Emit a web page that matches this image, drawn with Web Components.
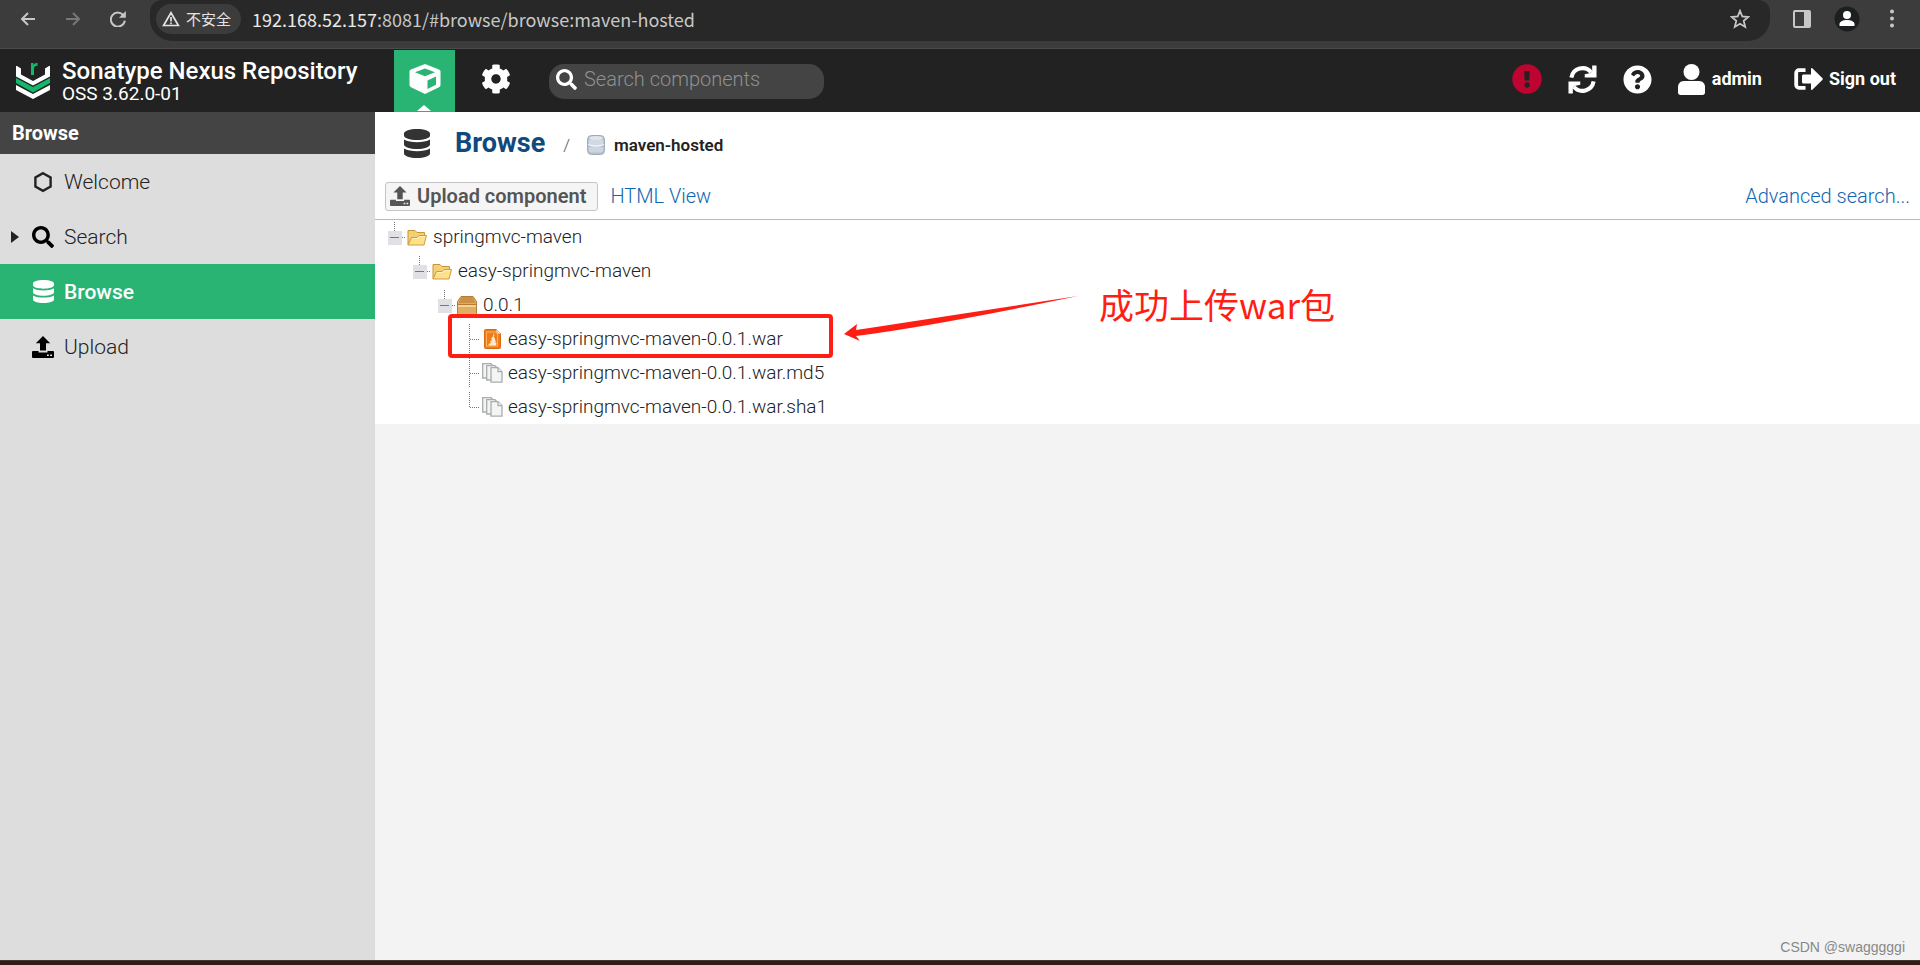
<!DOCTYPE html>
<html lang="en">
<head>
<meta charset="utf-8">
<title>Browse - Nexus Repository Manager</title>
<style>
  body { margin: 0; font-family: Roboto, "Noto Sans CJK SC", sans-serif; color: #222; }
</style>
</head>
<body>
<nexus-app></nexus-app>
<script>
const ICONS = {
  back: ['0 0 16 16', '<path d="M15 8H2M8 2 2 8l6 6" fill="none" stroke="currentColor" stroke-width="2"/>'],
  forward: ['0 0 16 16', '<path d="M1 8h13M8 2l6 6-6 6" fill="none" stroke="currentColor" stroke-width="2"/>'],
  reload: ['0 0 16 16', '<path d="M13.6 4.6A7 7 0 1 0 14.8 9.600" fill="none" stroke="currentColor" stroke-width="2"/><path d="M15.800 0v6.800H9z" fill="currentColor"/>'],
  warning: ['0 0 18 16', '<path d="M9 1.800 1.600 14.500h14.800z" fill="none" stroke="currentColor" stroke-width="1.700"/><path d="M9 6v4.500M9 11.500v1.700" stroke="currentColor" stroke-width="1.700"/>'],
  star: ['0 0 20 20', '<path d="M10 1.800l2.300 5.700 6 .5-4.600 3.900 1.500 6L10 14.700 4.800 17.900l1.500-6L1.700 8l6-.5z" fill="none" stroke="currentColor" stroke-width="1.800"/>'],
  panel: ['0 0 18 18', '<rect x="1" y="1" width="16" height="16" rx="1" fill="none" stroke="currentColor" stroke-width="2"/><path d="M11 1h6v16h-6z" fill="currentColor"/>'],
  avatar: ['0 0 26 26', '<circle cx="13" cy="13" r="12.500" fill="#1c1f1f"/><circle cx="13" cy="9" r="4" fill="#fff"/><path d="M5.500 20v-2c0-2.500 4-4 7.500-4s7.500 1.500 7.500 4v2z" fill="#fff"/>'],
  dots: ['0 0 4 20', '<circle cx="2" cy="2.500" r="2" fill="currentColor"/><circle cx="2" cy="9.500" r="2" fill="currentColor"/><circle cx="2" cy="16.500" r="2" fill="currentColor"/>'],
  logo: ['0 0 34 36', '<path d="M0 3h1l4 2.500v6L17 18l12-6.500v-6L33 3h1v10.500L17 22.500 0 13.500z" fill="#fff"/><path d="M0 15 17 24l17-9v5L17 29.500 0 20z" fill="#14b86b"/><path d="M0 22 17 31l17-9v5L17 36 0 27z" fill="#fff"/><path d="M15 12V0h2.500v2C18.500.5 19.500 0 21.500 0v2.800c-2.500 0-3.500 1-3.500 3.200v6z" fill="#14b86b"/>'],
  cube: ['0 0 32 30', '<path fill-rule="evenodd" d="M16 0 30 5.500Q31.500 6 31.500 7.500V21q0 1.500-1.500 2.200L16 30 2 23.200Q.5 22.500.5 21V7.500Q.5 6 2 5.500zM6 8.200l10 4 10-4L16 4.500zM18.500 16.500V25l8.500-4.300V12.500z" fill="currentColor"/>'],
  cog: ['0 0 512 512', '<path d="M487.4 315.7l-42.6-24.6c4.3-23.2 4.3-47 0-70.2l42.6-24.6c4.9-2.8 7.1-8.6 5.5-14-11.1-35.6-30-67.8-54.7-94.6-3.8-4.1-10-5.1-14.8-2.3L380.8 110c-17.9-15.4-38.5-27.3-60.8-35.100V25.800c0-5.600-3.900-10.500-9.400-11.700-36.700-8.200-74.300-7.800-109.200 0-5.500 1.200-9.400 6.100-9.400 11.700V75c-22.200 7.900-42.800 19.800-60.800 35.100L88.700 85.500c-4.900-2.800-11-1.900-14.800 2.300-24.700 26.700-43.600 58.900-54.700 94.600-1.700 5.400.6 11.200 5.500 14L67.300 221c-4.300 23.200-4.300 47 0 70.200l-42.600 24.600c-4.900 2.800-7.100 8.600-5.500 14 11.100 35.600 30 67.800 54.700 94.600 3.800 4.100 10 5.100 14.800 2.300l42.600-24.600c17.900 15.400 38.500 27.300 60.800 35.100v49.200c0 5.600 3.900 10.500 9.400 11.700 36.700 8.200 74.300 7.800 109.200 0 5.500-1.200 9.400-6.100 9.400-11.700v-49.200c22.200-7.900 42.800-19.800 60.800-35.100l42.600 24.600c4.900 2.800 11 1.900 14.800-2.300 24.700-26.700 43.600-58.900 54.700-94.600 1.500-5.500-.7-11.300-5.600-14.100zM256 336c-44.100 0-80-35.900-80-80s35.900-80 80-80 80 35.900 80 80-35.900 80-80 80z" fill="currentColor"/>'],
  search: ['0 0 512 512', '<path d="M505 442.700L405.300 343c-4.500-4.500-10.600-7-17-7H372c27.600-35.300 44-79.700 44-128C416 93.100 322.900 0 208 0S0 93.100 0 208s93.100 208 208 208c48.300 0 92.700-16.400 128-44v16.300c0 6.400 2.500 12.500 7 17l99.700 99.700c9.400 9.400 24.600 9.400 33.900 0l28.300-28.300c9.400-9.400 9.400-24.600.1-34zM208 336c-70.700 0-128-57.200-128-128 0-70.700 57.200-128 128-128 70.700 0 128 57.200 128 128 0 70.700-57.200 128-128 128z" fill="currentColor"/>'],
  alert: ['0 0 30 30', '<circle cx="15" cy="15" r="14.700" fill="#be0532"/><path d="M12.300 7h5.400l-.4 9.500h-4.600z" fill="#222"/><circle cx="15" cy="21" r="2.700" fill="#222"/>'],
  refresh: ['0 0 30 30', '<path d="M3.500 13A11.700 11.700 0 0 1 24 7.500M26.500 17A11.700 11.700 0 0 1 6 22.500" fill="none" stroke="currentColor" stroke-width="4.200"/><path d="M29.500.5V13H17.300V9.500l6-1.300 1.700-1.700V.5zM.5 29.500V17h12.200v3.500l-6 1.300L5 23.500v6z" fill="currentColor"/>'],
  help: ['0 0 512 512', '<path d="M504 256c0 136.997-111.043 248-248 248S8 392.997 8 256C8 119.083 119.043 8 256 8s248 111.083 248 248zM262.655 90c-54.497 0-89.255 22.957-116.549 63.758-3.536 5.286-2.353 12.415 2.715 16.258l34.699 26.310c5.205 3.947 12.621 3.008 16.665-2.122 17.864-22.658 30.113-35.797 57.303-35.797 20.429 0 45.698 13.148 45.698 32.958 0 14.976-12.363 22.667-32.534 33.976C247.128 238.528 216 254.941 216 296v4c0 6.627 5.373 12 12 12h56c6.627 0 12-5.373 12-12v-1.333c0-28.462 83.186-29.647 83.186-106.667 0-58.002-60.165-102-116.531-102zM256 338c-25.365 0-46 20.635-46 46 0 25.364 20.635 46 46 46s46-20.636 46-46c0-25.365-20.635-46-46-46z" fill="currentColor"/>'],
  user: ['0 0 27 31', '<circle cx="13.500" cy="8" r="8" fill="currentColor"/><path d="M6 17h15c4 0 6 3 6 6v5.500c0 1.500-1 2.500-2.500 2.500h-22C1 31 0 30 0 28.500V23c0-3 2-6 6-6z" fill="currentColor"/>'],
  signout: ['0 0 29 22', '<path d="M11.500 2.200H5A2.800 2.800 0 0 0 2.200 5v12A2.800 2.800 0 0 0 5 19.800h6.500" fill="none" stroke="currentColor" stroke-width="3.800"/><path d="M17 .8c0-.8.8-1 1.300-.5l10 9.700c.6.600.6 1.400 0 2l-10 9.700c-.5.5-1.300.3-1.300-.5V15.500H9.500c-.8 0-1.500-.7-1.500-1.500V8c0-.8.7-1.500 1.500-1.500H17z" fill="currentColor"/>'],
  hexagon: ['0 0 20 22', '<path d="M10 2.200l7.600 4.300v9L10 19.800l-7.600-4.300v-9z" fill="none" stroke="currentColor" stroke-width="2.400"/>'],
  database: ['0 0 26 29', '<path d="M0 4.500C0 1.800 6 0 13 0s13 1.800 13 4.500v2.200C26 9 20 11 13 11S0 9 0 6.700zM0 10.500c3 2 8 2.700 13 2.700s10-.7 13-2.700v5C26 18 20 20 13 20S0 18 0 15.500zM0 19.500c3 2 8 2.700 13 2.700s10-.7 13-2.700v5c0 2.500-6 4.500-13 4.500S0 27 0 24.500z" fill="currentColor"/>'],
  upload: ['0 0 22 22', '<path d="M11 0l7.200 7.200H14v7.300H8V7.200H3.800z" fill="currentColor"/><path d="M1 15h5.500v1.500h9V15H21q1 0 1 1v5q0 1-1 1H1q-1 0-1-1v-5q0-1 1-1z" fill="currentColor"/><path d="M15 18.500h1.800v1.500H15zM18.200 18.500H20v1.500h-1.800z" fill="#eee"/>'],
  hosted: ['0 0 18 20', '<rect x=".5" y=".5" width="17" height="19" rx="4" fill="#b5c0cd" stroke="#a2acb7"/><rect x="1.500" y="4" width="15" height="6" rx="3" fill="#d0d9e4"/><rect x="1.500" y="11.500" width="15" height="6" rx="3" fill="#ccd5e0"/><ellipse cx="9" cy="3" rx="7" ry="2" fill="#e0e5eb"/><path d="M1 9.500q8 3 16 0" fill="none" stroke="#f5f7fa" stroke-width="1.300"/>'],
  folder: ['0 0 20 17', '<path d="M1 16V1.500h7l2 2h7.500V6" fill="#f3cf78" stroke="#c89436"/><path d="M1 16 4.500 8.500H10l2-2h7.500L17 16z" fill="#fde08a" stroke="#d39b3c"/><path d="M5.500 9.500h5l2-2h5.500" fill="none" stroke="#fff3c0"/>'],
  box: ['0 0 20 19', '<path d="M4 .5h12l3.500 5v12q0 1-1 1h-17q-1 0-1-1v-12z" fill="#dfae60" stroke="#b47c36"/><path d="M4.500 1h11l3 6h-17z" fill="#cb9247"/><path d="M1 10h18" stroke="#f5d493" stroke-width="2"/><path d="M1 8.500h18" stroke="#b67a32"/>'],
  war: ['0 0 17 20', '<path d="M1.500.5h11l4 4v14q0 1-1 1h-14q-1 0-1-1v-17q0-1 1-1z" fill="#f07c17" stroke="#d96b14"/><path d="M12.500.5v4h4z" fill="#fff"/><rect x="2.500" y="3" width="11" height="14" fill="none" stroke="#ffb25b"/><path d="M10 4q1 2-.5 4 2 .5 1.500 3l1 1-1 1 1.500 1-.5 2.500H5l-.5-1.500 2.500-1-1-1.500 2-1.500Q6.500 10 8.500 8 9.500 6 10 4z" fill="#ffe9cf"/>'],
  copies: ['0 0 21 20', '<g fill="#f4f4f4" stroke="#a9acad" stroke-width="1.300"><path d="M.7.7H9l2.500 2.500V15H.7z"/><path d="M4.700 2.700H13l2.500 2.500V17H4.700z"/><path d="M9 4.700h7l4 4v10.500H9z"/><path d="M16 4.700v4h4"/></g>'],
  caret: ['0 0 8 12', '<path d="M0 0l8 6-8 6z" fill="currentColor"/>']
};

class UiIcon extends HTMLElement {
  connectedCallback() {
    const [box, shape] = ICONS[this.getAttribute('name')];
    const w = this.getAttribute('w'), h = this.getAttribute('h') || w;
    this.attachShadow({ mode: 'open' }).innerHTML =
      `<style>:host{display:block;flex:none}svg{display:block}</style>
       <svg width="${w}" height="${h}" viewBox="${box}" preserveAspectRatio="none" aria-hidden="true">${shape}</svg>`;
  }
}

function define(name, html) {
  const template = document.createElement('template');
  template.innerHTML = html;
  customElements.define(name, class extends HTMLElement {
    constructor() {
      super();
      this.attachShadow({ mode: 'open' }).append(template.content.cloneNode(true));
    }
  });
}

customElements.define('ui-icon', UiIcon);

define('browser-bar', `
<style>
  :host { display: flex; box-sizing: border-box; height: 49px; padding: 0 20px; background: #3c3c3c; border-bottom: 1px solid #4a4a4a; color: #c7c7c7; }
  button { border: 0; padding: 0; background: none; color: inherit; display: block; }
  .nav { display: flex; align-items: center; gap: 29px; height: 38px; width: 130px; }
  .nav button:nth-child(2) { color: #777; }
  .address { flex: 1; display: flex; align-items: center; box-sizing: border-box; height: 41px; padding: 0 20px 3px 6px; background: #282828; border-radius: 12px 12px 22px 22px; }
  .chip { display: flex; align-items: center; gap: 6px; height: 30px; padding: 0 10px 0 6px; border-radius: 15px; background: #3c3c3c; font: 15px/30px "Noto Sans CJK SC", sans-serif; color: #e3e3e3; }
  .url { flex: 1; margin-left: 11px; font: 18px/38px "Noto Sans CJK SC", sans-serif; color: #c7c7c7; }
  .url span { color: #e8e8e8; }
  .tools { display: flex; align-items: center; gap: 23px; height: 38px; padding: 0 6px 0 23px; }
  .tools .menu { margin-left: 7px; }
</style>
<div class="nav">
  <button aria-label="Back"><ui-icon name="back" w="16"></ui-icon></button>
  <button aria-label="Forward"><ui-icon name="forward" w="16"></ui-icon></button>
  <button aria-label="Reload"><ui-icon name="reload" w="16"></ui-icon></button>
</div>
<div class="address">
  <button class="chip"><ui-icon name="warning" w="18" h="16"></ui-icon>不安全</button>
  <div class="url"><span>192.168.52.157</span>:8081/#browse/browse:maven-hosted</div>
  <button aria-label="Bookmark"><ui-icon name="star" w="20"></ui-icon></button>
</div>
<div class="tools">
  <button aria-label="Side panel"><ui-icon name="panel" w="18"></ui-icon></button>
  <button aria-label="Profile"><ui-icon name="avatar" w="26"></ui-icon></button>
  <button class="menu" aria-label="Menu"><ui-icon name="dots" w="4" h="20"></ui-icon></button>
</div>`);

define('app-header', `
<style>
  :host { display: flex; align-items: center; box-sizing: border-box; height: 63px; padding: 1px 24px 0 16px; background: #222; color: #fff; }
  .brand { display: flex; align-items: center; gap: 12px; width: 378px; }
  h1 { margin: 0; font-size: 24px; line-height: 26px; font-weight: 500; }
  p { margin: 0; font-size: 19px; line-height: 20px; font-weight: 400; }
  button { display: flex; align-items: center; justify-content: center; gap: 8px; border: 0; padding: 0; background: none; color: inherit; font: 700 18px/24px Roboto, sans-serif; }
  .tab { position: relative; width: 61px; height: 62px; background: #2ab474; padding-bottom: 4px; }
  .tab::after { content: ""; position: absolute; bottom: 1px; left: 23px; border: 7px solid transparent; border-top: 0; border-bottom: 6px solid #fff; }
  .cog { width: 82px; height: 62px; padding-bottom: 4px; }
  .search { display: flex; align-items: center; gap: 7px; box-sizing: border-box; width: 275px; height: 35px; margin: 0 0 0 12px; padding: 0 10px 4px 7px; border-radius: 15px; background: #444; }
  input { flex: 1; min-width: 0; border: 0; padding: 0; background: none; outline: 0; color: #fff; font: 300 20px/28px Roboto, sans-serif; }
  input::placeholder { color: #909090; opacity: 1; }
  .spacer { flex: 1; }
  .actions { display: flex; align-items: center; gap: 26px; padding-bottom: 4px; }
  .actions button:nth-child(4) { gap: 7px; }
  .actions .out { margin-left: 6px; gap: 6px; }
</style>
<div class="brand"><ui-icon name="logo" w="34" h="36"></ui-icon><div><h1>Sonatype Nexus Repository</h1><p>OSS 3.62.0-01</p></div></div>
<button class="tab" aria-label="Browse server contents"><ui-icon name="cube" w="32" h="30"></ui-icon></button>
<button class="cog" aria-label="Server administration"><ui-icon name="cog" w="30"></ui-icon></button>
<label class="search"><ui-icon name="search" w="21"></ui-icon><input placeholder="Search components" aria-label="Search components"></label>
<div class="spacer"></div>
<div class="actions">
  <button aria-label="System status"><ui-icon name="alert" w="30"></ui-icon></button>
  <button aria-label="Refresh"><ui-icon name="refresh" w="29"></ui-icon></button>
  <button aria-label="Help"><ui-icon name="help" w="29"></ui-icon></button>
  <button><ui-icon name="user" w="27" h="31"></ui-icon>admin</button>
  <button class="out"><ui-icon name="signout" w="29" h="22"></ui-icon>Sign out</button>
</div>`);

define('nav-item', `
<style>
  :host { display: block; color: #222; font-weight: 300; }
  :host([active]) { background: #2ab474; color: #fff; font-weight: 500; }
  a { display: grid; grid-template-columns: 21px 22px 1fr; align-items: center; height: 55px; padding-left: 11px; color: inherit; text-decoration: none; font-size: 21px; line-height: 28px; }
  .label { padding-left: 10px; }
  .icon { display: flex; justify-content: center; color: var(--icon, inherit); }
</style>
<a href="#"><span><slot name="caret"></slot></span><span class="icon"><slot name="icon"></slot></span><span class="label"><slot></slot></span></a>`);

define('side-nav', `
<style>
  :host { display: block; background: #ddd; }
  h2 { margin: 0; padding: 0 12px; background: #444; color: #fff; font-size: 20px; line-height: 42px; font-weight: 700; }
  .dark { --icon: #000; }
</style>
<h2>Browse</h2>
<nav>
  <nav-item><ui-icon slot="icon" name="hexagon" w="20" h="22"></ui-icon>Welcome</nav-item>
  <nav-item class="dark"><ui-icon slot="caret" name="caret" w="8" h="12"></ui-icon><ui-icon slot="icon" name="search" w="22"></ui-icon>Search</nav-item>
  <nav-item active><ui-icon slot="icon" name="database" w="21" h="23"></ui-icon>Browse</nav-item>
  <nav-item class="dark"><ui-icon slot="icon" name="upload" w="22"></ui-icon>Upload</nav-item>
</nav>`);

define('page-head', `
<style>
  :host { display: block; background: #fff; border-bottom: 1px solid #bbb; }
  .crumbs { display: flex; align-items: center; height: 66px; padding: 0 29px; }
  .crumbs > ui-icon:first-child { color: #333; margin-bottom: 3px; }
  h2 { margin: 0 0 4px 25px; font-size: 27px; line-height: 32px; font-weight: 700; }
  a { color: #0f66b0; text-decoration: none; }
  h2 a { color: #0f4a7d; }
  .sep { margin: 0 17px 0 18px; font-size: 17px; color: #555; font-weight: 300; }
  .repo { margin-left: 9px; font-size: 17px; font-weight: 600; }
  .bar { display: flex; align-items: center; height: 41px; padding: 0 10px; }
  .bar > * { margin-bottom: 5px; font-size: 20px; line-height: 24px; font-weight: 300; }
  button { display: flex; align-items: center; gap: 7px; box-sizing: border-box; height: 29px; padding: 0 11px 1px 4px; border: 1px solid #c4c4c4; border-radius: 3px; background: #f5f5f5; color: #555; font-family: inherit; }
  .bar button { font-weight: 600; }
  .bar a { margin-left: 12px; }
  .bar a:last-child { margin-left: auto; }
</style>
<div class="crumbs">
  <ui-icon name="database" w="26" h="29"></ui-icon>
  <h2><a href="#">Browse</a></h2><span class="sep">/</span>
  <ui-icon name="hosted" w="18" h="20"></ui-icon><span class="repo">maven-hosted</span>
</div>
<div class="bar">
  <button><ui-icon name="upload" w="20"></ui-icon>Upload component</button>
  <a href="#">HTML View</a>
  <a href="#">Advanced search...</a>
</div>`);

define('tree-node', `
<style>
  :host { display: block; }
  .row { display: flex; align-items: center; height: 34px; font-size: 19px; line-height: 24px; font-weight: 300; }
  .joint { flex: none; width: 20px; height: 34px; }
  svg { display: block; }
  svg.leaf { display: none; }
  :host([leaf]) svg.leaf { display: block; }
  :host([leaf]) svg.branch, :host([last]) .more, :host([leaf]) .kids { display: none; }
  .icon { display: flex; width: 20px; margin: 0 6px 0 0; justify-content: center; }
  .kids { padding-left: 25px; }
</style>
<div class="row" role="treeitem">
  <span class="joint">
    <svg class="branch" width="20" height="34" aria-hidden="true"><path d="M7.500 2v9M15 17.500h3" stroke="#777" stroke-dasharray="1 1"/><rect x="1" y="11" width="14" height="14" fill="#dfe1e5"/><path d="M3 17.500h9" stroke="#777"/></svg>
    <svg class="leaf" width="20" height="34" aria-hidden="true"><path d="M7.500 2v15.500h10" fill="none" stroke="#777" stroke-dasharray="1 1"/><path class="more" d="M7.500 18v14" stroke="#777" stroke-dasharray="1 1"/></svg>
  </span>
  <span class="icon"><slot name="icon"></slot></span>
  <span><slot name="label"></slot></span>
</div>
<div class="kids"><slot></slot></div>`);

define('callout-note', `
<style>
  :host { position: absolute; left: 73px; top: 94px; color: #ff1e14; pointer-events: none; }
  .frame { box-sizing: border-box; width: 385px; height: 44px; border: 4px solid; border-radius: 4px; }
  svg { position: absolute; left: 396px; top: -19px; }
  .text { position: absolute; left: 651px; top: -36px; white-space: nowrap; font: 35px/52px "Noto Sans CJK SC", sans-serif; }
</style>
<div class="frame"></div>
<svg width="236" height="50" viewBox="0 0 236 50" aria-hidden="true"><path d="M0 39 13 29 12 35Q90 23 234 1 90 31 12 41l4 5z" fill="currentColor"/></svg>
<div class="text"><slot></slot></div>`);

define('component-tree', `
<style>
  :host { display: block; position: relative; background: #fff; padding-left: 12px; }
</style>
<div role="tree">
<tree-node><ui-icon slot="icon" name="folder" w="20" h="17"></ui-icon><span slot="label">springmvc-maven</span>
  <tree-node><ui-icon slot="icon" name="folder" w="20" h="17"></ui-icon><span slot="label">easy-springmvc-maven</span>
    <tree-node><ui-icon slot="icon" name="box" w="20" h="19"></ui-icon><span slot="label">0.0.1</span>
      <tree-node leaf><ui-icon slot="icon" name="war" w="17" h="20"></ui-icon><span slot="label">easy-springmvc-maven-0.0.1.war</span></tree-node>
      <tree-node leaf><ui-icon slot="icon" name="copies" w="21" h="20"></ui-icon><span slot="label">easy-springmvc-maven-0.0.1.war.md5</span></tree-node>
      <tree-node leaf last><ui-icon slot="icon" name="copies" w="21" h="20"></ui-icon><span slot="label">easy-springmvc-maven-0.0.1.war.sha1</span></tree-node>
    </tree-node>
  </tree-node>
</tree-node>
</div>
<callout-note>成功上传war包</callout-note>`);

define('nexus-app', `
<style>
  :host { display: flex; flex-direction: column; min-height: 100vh; }
  .body { flex: 1; display: grid; grid-template-columns: 375px 1fr; }
  main { position: relative; background: #f3f3f3; }
  .mark { position: absolute; right: 15px; bottom: 3px; font: 14px/20px "Liberation Sans", sans-serif; color: #888; }
  .edge { box-sizing: border-box; height: 5px; background: #351c12; border-top: 1px solid #443830; }
</style>
<browser-bar></browser-bar>
<app-header></app-header>
<div class="body">
  <side-nav></side-nav>
  <main>
    <page-head></page-head>
    <component-tree></component-tree>
    <div class="mark">CSDN @swagggggi</div>
  </main>
</div>
<div class="edge"></div>`);
</script>
</body>
</html>
